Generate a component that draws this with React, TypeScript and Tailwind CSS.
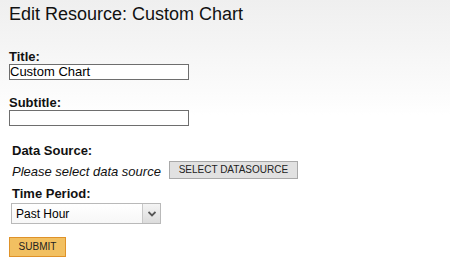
import React from "react";

function Label({ children, indent }: { children: React.ReactNode; indent?: boolean }) {
  return (
    <div
      className={
        "text-[13px] leading-[15px] font-bold text-[#111] " + (indent ? "ml-[3px]" : "")
      }
    >
      {children}
    </div>
  );
}

function TextBox({ value }: { value?: string }) {
  return (
    <div className="w-[180px] h-[16px] border border-[#6e6e6e] bg-white flex items-center text-[13px] leading-[14px] text-black">
      <span className="pl-[0px]">{value}</span>
    </div>
  );
}

export default function App() {
  return (
    <div
      className="w-[450px] h-[261px] overflow-hidden bg-[linear-gradient(to_bottom,#efefef_0px,#f4f4f4_40px,#fdfdfd_105px,#ffffff_115px)] pl-[9px] pt-[4px]"
      style={{ fontFamily: '"Liberation Sans", Arial, sans-serif' }}
    >
      <h1 className="text-[18px] leading-[21px] text-[#111]">Edit Resource: Custom Chart</h1>

      <div className="mt-[24px]">
        <Label>Title:</Label>
        <TextBox value="Custom Chart" />
      </div>

      <div className="mt-[15px]">
        <Label>Subtitle:</Label>
        <TextBox />
      </div>

      <div className="mt-[17px]">
        <Label indent>Data Source:</Label>
        <div className="mt-[3px] ml-[3px] flex items-start h-[18px]">
          <span className="pt-[3px] text-[13px] leading-[15px] italic text-[#111]">
            Please select data source
          </span>
          <button className="ml-[8px] w-[129px] h-[18px] border border-[#a9a9a9] bg-[#e1e1e1] text-[10px] leading-[16px] text-[#222] text-center">
            SELECT DATASOURCE
          </button>
        </div>
      </div>

      <div className="mt-[7px]">
        <Label indent>Time Period:</Label>
        <div className="mt-[2px] ml-[2px] w-[150px] h-[21px] border border-[#b9b9b9] bg-[linear-gradient(to_bottom,#ffffff,#f7f7f7)] flex">
          <div className="flex-1 flex items-center pl-[4px] text-[12px] leading-[14px] text-black">
            Past Hour
          </div>
          <div className="w-[18px] h-full border-l border-[#c8c8c8] bg-[linear-gradient(to_bottom,#f4f4f4,#dcdcdc)] flex items-center justify-center">
            <svg width="8" height="6" viewBox="0 0 8 6">
              <path d="M0.5 1 L4 4.5 L7.5 1" fill="none" stroke="#555" strokeWidth="1.8" />
            </svg>
          </div>
        </div>
      </div>

      <button className="mt-[13px] w-[57px] h-[20px] border border-[#df9229] bg-[#f2c061] text-[10px] leading-[18px] text-[#222] text-center">
        SUBMIT
      </button>
    </div>
  );
}
